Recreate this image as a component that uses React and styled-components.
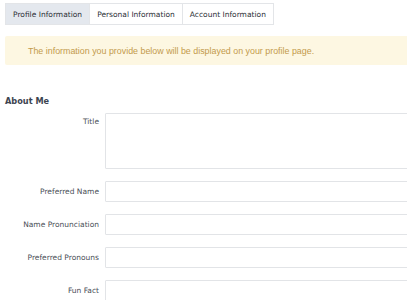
import React from 'react';
import styled, { createGlobalStyle } from 'styled-components';

const GlobalStyle = createGlobalStyle`
  html, body {
    margin: 0;
    padding: 0;
    background: #fff;
  }
  body {
    font-family: "DejaVu Sans", sans-serif;
  }
`;

const Page = styled.div`
  width: 100%;
  height: 300px;
  overflow: hidden;
  padding: 3px 0 0 5px;
  box-sizing: border-box;
`;

const Tabs = styled.nav`
  display: flex;
  width: max-content;
  border: 1px solid #e3e5e8;
`;

const Tab = styled.div`
  padding: 0 7px;
  height: 20px;
  display: flex;
  align-items: center;
  font-size: 7.5px;
  color: #2b2f36;
  background: ${(p) => (p.$active ? '#e4e8ee' : '#fff')};
  border-left: ${(p) => (p.$first ? 'none' : '1px solid #e3e5e8')};
`;

const Alert = styled.div`
  margin: 11px -6px 0 0;
  height: 29px;
  display: flex;
  align-items: center;
  padding-left: 23px;
  background: #fdf7e2;
  border-radius: 2px;
  font-family: "Liberation Sans", Arial, sans-serif;
  font-size: 8.9px;
  color: #c39a4c;
`;

const Heading = styled.h3`
  margin: 31px 0 0;
  font-size: 8.2px;
  font-weight: bold;
  color: #3d4450;
`;

const Form = styled.div`
  margin-top: 7px;
  display: flex;
  flex-direction: column;
  gap: 12px;
`;

const Row = styled.div`
  display: grid;
  grid-template-columns: 94px 1fr;
  column-gap: 6px;
  align-items: ${(p) => (p.$top ? 'start' : 'center')};
`;

const Label = styled.label`
  text-align: right;
  font-size: 7.5px;
  color: #4a4f57;
  padding-top: ${(p) => (p.$top ? '4px' : '0')};
`;

const Field = styled.div`
  height: ${(p) => p.$h}px;
  margin-right: -6px;
  border: 1px solid #e2e4e7;
  border-radius: 1px;
  background: #fff;
`;

const fields = [
  { label: 'Preferred Name' },
  { label: 'Name Pronunciation' },
  { label: 'Preferred Pronouns' },
  { label: 'Fun Fact' },
];

export default function App() {
  return (
    <Page>
      <GlobalStyle />
      <Tabs>
        <Tab $active $first>Profile Information</Tab>
        <Tab>Personal Information</Tab>
        <Tab>Account Information</Tab>
      </Tabs>
      <Alert>The information you provide below will be displayed on your profile page.</Alert>
      <Heading>About Me</Heading>
      <Form>
        <Row $top>
          <Label $top>Title</Label>
          <Field $h={54} />
        </Row>
        {fields.map((f) => (
          <Row key={f.label}>
            <Label>{f.label}</Label>
            <Field $h={19} />
          </Row>
        ))}
      </Form>
    </Page>
  );
}
